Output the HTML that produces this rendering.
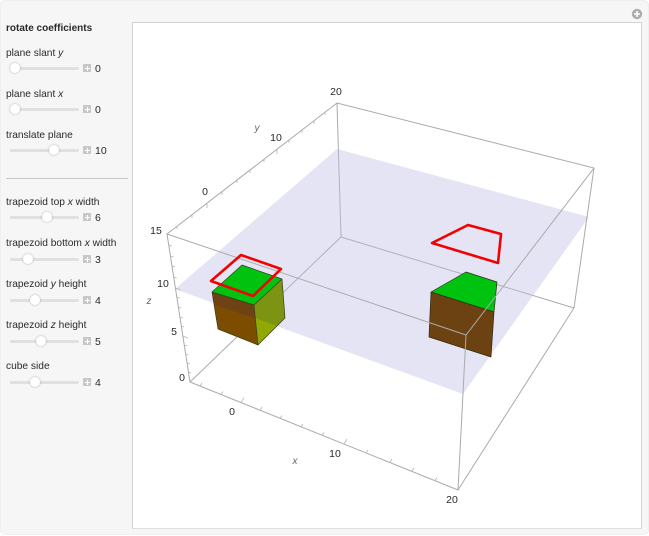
<!DOCTYPE html>
<html><head><meta charset="utf-8"><style>
html,body{margin:0;padding:0;background:#fff}
body{width:649px;height:536px;position:relative;overflow:hidden;font-family:"Liberation Sans",sans-serif;color:#2a2a2a}
#panel{position:absolute;left:0;top:0;width:647px;height:533px;background:#f6f6f6;border:1px solid #efefef;border-radius:5px}
#canvas{position:absolute;left:132px;top:22px;width:508px;height:505px;background:#fff;border:1px solid #d2d2d2;border-bottom-color:#dedede}
.l{position:absolute;left:6px;font-size:10.2px;line-height:12px;white-space:nowrap}
.l i{font-size:10.2px}
.t{position:absolute;left:10px;width:69px;height:3px;background:#e0e0e0;border-radius:2px}
.k{position:absolute;width:10px;height:10px;border-radius:50%;background:#fff;box-shadow:0 0 2px rgba(0,0,0,.3)}
.p{position:absolute;left:83px;width:8px;height:8px;background:#c8c8c8}
.p:before{content:"";position:absolute;left:1.5px;top:3.5px;width:5px;height:1px;background:#fff}
.p:after{content:"";position:absolute;left:3.5px;top:1.5px;width:1px;height:5px;background:#fff}
.v{position:absolute;left:95px;font-size:10.5px;line-height:12px}
#div{position:absolute;left:6px;top:178px;width:122px;height:1px;background:#c9c9c9}
svg{position:absolute;left:0;top:0}
svg text{font-family:"Liberation Sans",sans-serif;font-size:10.5px;fill:#2a2a2a;text-anchor:middle}
svg text.a{font-style:italic;fill:#666;font-size:10px}
</style></head><body>
<div id="panel"></div>
<div id="canvas"></div>
<div class="l" style="top:23px;font-weight:bold;font-size:10px">rotate coefficients</div>
<div class="l" style="top:48px">plane slant <i>y</i></div>
<div class="t" style="top:67px"></div><div class="k" style="left:10px;top:63px"></div><div class="p" style="top:64px"></div><div class="v" style="top:63px">0</div>
<div class="l" style="top:89px">plane slant <i>x</i></div>
<div class="t" style="top:108px"></div><div class="k" style="left:10px;top:104px"></div><div class="p" style="top:105px"></div><div class="v" style="top:104px">0</div>
<div class="l" style="top:130px">translate plane</div>
<div class="t" style="top:149px"></div><div class="k" style="left:49px;top:145px"></div><div class="p" style="top:146px"></div><div class="v" style="top:145px">10</div>
<div id="div"></div>
<div class="l" style="top:197px">trapezoid top <i>x</i> width</div>
<div class="t" style="top:216px"></div><div class="k" style="left:42px;top:212px"></div><div class="p" style="top:213px"></div><div class="v" style="top:212px">6</div>
<div class="l" style="top:238px">trapezoid bottom <i>x</i> width</div>
<div class="t" style="top:258px"></div><div class="k" style="left:23px;top:254px"></div><div class="p" style="top:255px"></div><div class="v" style="top:254px">3</div>
<div class="l" style="top:279px">trapezoid <i>y</i> height</div>
<div class="t" style="top:299px"></div><div class="k" style="left:30px;top:295px"></div><div class="p" style="top:296px"></div><div class="v" style="top:295px">4</div>
<div class="l" style="top:320px">trapezoid <i>z</i> height</div>
<div class="t" style="top:340px"></div><div class="k" style="left:36px;top:336px"></div><div class="p" style="top:337px"></div><div class="v" style="top:336px">5</div>
<div class="l" style="top:361px">cube side</div>
<div class="t" style="top:381px"></div><div class="k" style="left:30px;top:377px"></div><div class="p" style="top:378px"></div><div class="v" style="top:377px">4</div>
<svg width="649" height="536" viewBox="0 0 649 536">
<circle cx="637" cy="14" r="5.2" fill="#adadad"/><path d="M634 14h6M637 11v6" stroke="#fff" stroke-width="1.6"/>
<!-- back edges -->
<path d="M190 382L341 237L574 308M341 237L337 103" fill="none" stroke="#aaa" stroke-width="1"/>
<!-- plane -->
<polygon points="337,149 589,217 463,394 175,289" fill="rgb(187,187,229)" fill-opacity=".4"/>
<!-- left cube -->
<g stroke-linejoin="round">
<polygon points="212,292 254,305 258,345 218,329" fill="#7c4c00"/>
<polygon points="212,292 254,305 255,318 215,305" fill="#6e4214"/>
<polygon points="254,305 282,279 285,318 258,345" fill="#91a800"/>
<polygon points="254,305 282,279 285,318 277,326 255,318" fill="#7d9412"/>
<polygon points="242,265 282,279 254,305 212,292" fill="#00c30f"/>
<path d="M242 265L282 279L254 305L212 292ZM212 292L218 329L258 345L254 305M258 345L285 318L282 279" fill="none" stroke="#3a3a1a" stroke-width=".7"/>
<!-- right cube -->
<polygon points="431,292 494,312 491,357 429,337" fill="#6d4213"/>
<polygon points="466,272 497,282 494,312 431,292" fill="#00c30f"/>
<path d="M466 272L497 282L494 312L431 292ZM431 292L429 337L491 357L494 312" fill="none" stroke="#2f2a10" stroke-width=".7"/>
</g>
<!-- front edges -->
<path d="M167 234L337 103L594 168L466 335L167 234L190 382L458 490L466 335M458 490L574 308L594 168" fill="none" stroke="#aaa" stroke-width="1"/>
<!-- ticks -->
<path d="M177 226v3M192 215v3M207 203v5M222 192v3M237 180v3M250 170v3M264 159v3M277 149v5M289 140v3M302 130v3M314 121v3M325 112v3" fill="none" stroke="#b5b5b5" stroke-width=".8"/>
<path d="M168.7 245l3 1M170.4 256l3 1M172 266l3 1M173.6 277l3 1M175.3 288l5 2M176.7 297l3 1M178.2 307l3 1M179.8 317l3 1M181.2 326l3 1M182.7 336l5 2M184.1 345l3 1M185.5 354l3 1M186.9 363l3 1M188.3 372l3 1" fill="none" stroke="#b5b5b5" stroke-width=".8"/>
<path d="M200 386l2-3M221 394.5l2-3M241 402.6l3-5M260 410l2-3M280 418.5l2-3M301 427l2-3M322 435.5l2-3M344 444l3-5M366 453l2-3M390 462l2-3M412 471l2-3M435 480.5l2-3" fill="none" stroke="#b5b5b5" stroke-width=".8"/>
<!-- red trapezoids -->
<polygon points="241,255 281,269 253,296 211,281" fill="none" stroke="#f50000" stroke-width="2.6" stroke-linejoin="round"/>
<polygon points="468,225 501,234 498,263 432,243" fill="none" stroke="#f50000" stroke-width="2.6" stroke-linejoin="round"/>
<!-- labels -->
<text x="336" y="95">20</text><text x="276" y="141">10</text><text x="205" y="195">0</text>
<text x="156" y="234">15</text><text x="163" y="287">10</text><text x="174" y="335">5</text><text x="182" y="381">0</text>
<text x="232" y="415">0</text><text x="335" y="457">10</text><text x="452" y="503">20</text>
<text class="a" x="257" y="131">y</text><text class="a" x="149" y="304">z</text><text class="a" x="295" y="464">x</text>
</svg>
</body></html>
